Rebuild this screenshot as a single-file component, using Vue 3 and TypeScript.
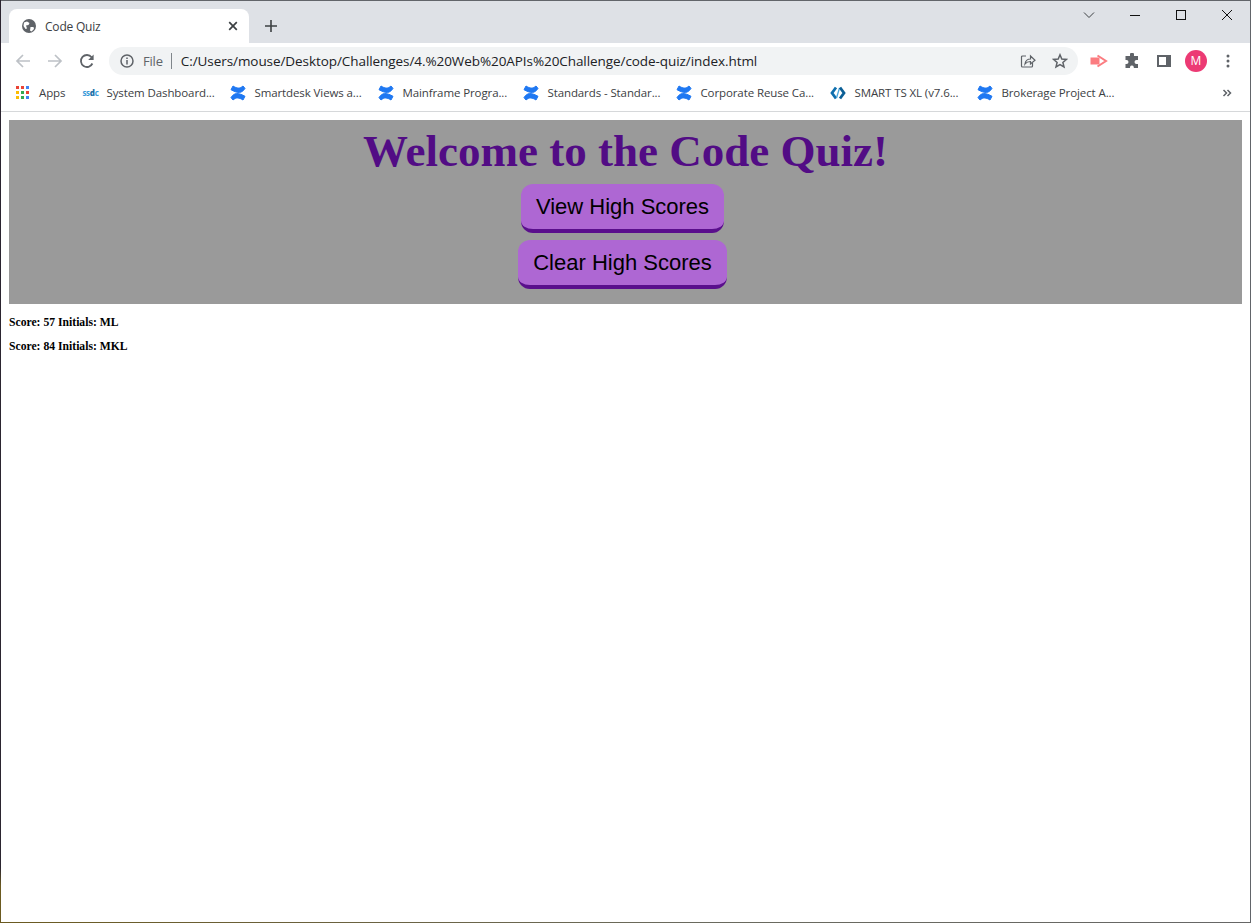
<script setup lang="ts">
interface Bookmark {
  label: string
  icon: 'confluence' | 'ssdc' | 'smart'
  width: number
}

const bookmarks: Bookmark[] = [
  { label: 'System Dashboard...', icon: 'ssdc', width: 108 },
  { label: 'Smartdesk Views a...', icon: 'confluence', width: 108 },
  { label: 'Mainframe Progra...', icon: 'confluence', width: 105 },
  { label: 'Standards - Standar...', icon: 'confluence', width: 113 },
  { label: 'Corporate Reuse Ca...', icon: 'confluence', width: 114 },
  { label: 'SMART TS XL (v7.6...', icon: 'smart', width: 107 },
  { label: 'Brokerage Project A...', icon: 'confluence', width: 113 },
]

const appColors = ['#ea4335', '#ea4335', '#4285f4', '#fbbc04', '#34a853', '#ea4335', '#fbbc04', '#34a853', '#4285f4']

const scores = [
  { score: 57, initials: 'ML' },
  { score: 84, initials: 'MKL' },
]
</script>

<template>
  <div class="frame">
    <div class="window">
      <div class="tabstrip">
        <div class="tab">
          <svg class="favicon" width="16" height="16" viewBox="0 0 16 16">
            <circle cx="8" cy="8" r="7" fill="#5f6368" />
            <path d="M3 4.500 6 3.500 8.500 5 7.500 7 5 7.500 6 10.500 4.500 11 2.500 8ZM9.500 9 12.500 9 13 11 10.500 13.500 9 12.500Z" fill="#fff" />
          </svg>
          <span class="tab_title">Code Quiz</span>
          <svg class="tab_close" width="10" height="10" viewBox="0 0 10 10">
            <path d="M1.200 1.200 8.800 8.800M8.800 1.200 1.200 8.800" stroke="#3c4043" stroke-width="1.700" fill="none" />
          </svg>
        </div>
        <svg class="newtab" width="14" height="14" viewBox="0 0 14 14">
          <path d="M7 1V13M1 7H13" stroke="#3c4043" stroke-width="1.600" fill="none" />
        </svg>
        <div class="spacer"></div>
        <div class="winctl">
          <svg width="12" height="8" viewBox="0 0 12 8"><path d="M1 1.500 6 6.500 11 1.500" stroke="#3c4043" fill="none" /></svg>
        </div>
        <div class="winctl">
          <svg width="12" height="12" viewBox="0 0 12 12"><path d="M1 6.500H11" stroke="#111" fill="none" /></svg>
        </div>
        <div class="winctl">
          <svg width="12" height="12" viewBox="0 0 12 12"><rect x="1.500" y="1.500" width="9" height="9" stroke="#111" fill="none" /></svg>
        </div>
        <div class="winctl">
          <svg width="12" height="12" viewBox="0 0 12 12"><path d="M1 1 11 11M11 1 1 11" stroke="#111" fill="none" /></svg>
        </div>
      </div>

      <div class="toolbar">
        <svg class="navicon" width="16" height="16" viewBox="0 0 16 16">
          <path d="M15 8H2M8 2 2 8 8 14" stroke="#bdc1c6" stroke-width="1.700" fill="none" />
        </svg>
        <svg class="navicon" width="16" height="16" viewBox="0 0 16 16">
          <path d="M1 8H14M8 2 14 8 8 14" stroke="#bdc1c6" stroke-width="1.700" fill="none" />
        </svg>
        <svg class="navicon" width="16" height="16" viewBox="0 0 16 16">
          <path d="M13.400 10.500A6 6 0 1 1 12.600 4.200" stroke="#5f6368" stroke-width="1.800" fill="none" />
          <path d="M14.600 1.600V7H9.200Z" fill="#5f6368" />
        </svg>
        <div class="omnibox">
          <svg width="16" height="16" viewBox="0 0 16 16">
            <circle cx="8" cy="8" r="6" stroke="#5f6368" stroke-width="1.500" fill="none" />
            <path d="M8 7V11.500M8 4.500V6" stroke="#5f6368" stroke-width="1.500" fill="none" />
          </svg>
          <span class="omnibox_file">File</span>
          <span class="omnibox_sep"></span>
          <span class="omnibox_url">C:/Users/mouse/Desktop/Challenges/4.%20Web%20APIs%20Challenge/code-quiz/index.html</span>
          <svg class="omnibox_share" width="16" height="16" viewBox="0 0 16 16">
            <path d="M6 3H2.500A1 1 0 0 0 1.500 4V13A1 1 0 0 0 2.500 14H11.500A1 1 0 0 0 12.500 13V10" stroke="#5f6368" stroke-width="1.200" fill="none" />
            <path d="M5 11C5.500 7.500 7.500 6 10.500 6V3L15 7.200 10.500 11V8.500C8 8.500 6.300 9.300 5 11Z" stroke="#5f6368" stroke-width="1.200" fill="none" />
          </svg>
          <svg width="16" height="16" viewBox="0 0 16 16">
            <path d="M8 1.800 9.800 6 14.400 6.400 10.900 9.400 12 13.900 8 11.500 4 13.900 5.100 9.400 1.600 6.400 6.200 6Z" stroke="#5f6368" stroke-width="1.500" fill="none" />
          </svg>
        </div>
        <svg class="ext ext_first" width="18" height="14" viewBox="0 0 18 14">
          <path d="M7.500 1.500 16 7 7.500 12.500" stroke="#fb7c80" stroke-width="2" fill="none" />
          <rect x="0.500" y="3.500" width="9" height="7" fill="#fb7c80" />
        </svg>
        <svg class="ext" width="16" height="16" viewBox="0 0 16 16">
          <path d="M6 1.500A2 2 0 0 1 10 1.500V3H14V7H12.500A2 2 0 0 0 12.500 11H14V15H9.800V14A2 2 0 0 0 6 14V15H1.500V11H2.500A2 2 0 0 0 2.500 7H1.500V3H6Z" fill="#5f6368" />
        </svg>
        <svg class="ext" width="16" height="14" viewBox="0 0 16 14">
          <path d="M1 1H15V13H1Z M3 3V11H10V3Z" fill="#5f6368" fill-rule="evenodd" />
        </svg>
        <div class="avatar">M</div>
        <svg class="ext" width="4" height="14" viewBox="0 0 4 14">
          <circle cx="2" cy="2" r="1.500" fill="#5f6368" />
          <circle cx="2" cy="7" r="1.500" fill="#5f6368" />
          <circle cx="2" cy="12" r="1.500" fill="#5f6368" />
        </svg>
      </div>

      <div class="bookmarks">
        <div class="bm bm_apps">
          <div class="apps_grid">
            <span v-for="(c, i) in appColors" :key="i" :style="{ background: c }"></span>
          </div>
          <span class="bm_label">Apps</span>
        </div>
        <div v-for="b in bookmarks" :key="b.label" class="bm">
          <span v-if="b.icon === 'ssdc'" class="ssdc">ss<b>d</b>c</span>
          <svg v-else-if="b.icon === 'confluence'" width="16" height="16" viewBox="0 0 16 16">
            <path d="M1 12.600C4 8 7.500 7 15 11.300L13 15C9 12.500 6.500 12 3 15Z" fill="#1f78f2" stroke="#1f78f2" />
            <path d="M15 3.400C12 8 8.500 9 1 4.700L3 1C7 3.500 9.500 4 13 1Z" fill="#1f78f2" stroke="#1f78f2" />
          </svg>
          <svg v-else width="16" height="16" viewBox="0 0 16 16">
            <path d="M6 2.500 2 8 6 13.500" stroke="#0f6fae" stroke-width="2.800" fill="none" />
            <path d="M9.500 3 6.500 13" stroke="#4aa6dc" stroke-width="1.300" fill="none" />
            <path d="M10 2.500 14 8 10 13.500" stroke="#0b5f96" stroke-width="2.800" fill="none" />
          </svg>
          <span class="bm_label" :style="{ width: b.width + 'px' }">{{ b.label }}</span>
        </div>
        <div class="spacer"></div>
        <svg class="bm_more" width="10" height="10" viewBox="0 0 10 10">
          <path d="M1.500 2 4.500 5 1.500 8M5.500 2 8.500 5 5.500 8" stroke="#5f6368" stroke-width="1.500" fill="none" />
        </svg>
      </div>

      <main class="page">
        <header class="hero">
          <h1 class="hero_title">Welcome to the Code Quiz!</h1>
          <button class="btn">View High Scores</button>
          <button class="btn">Clear High Scores</button>
        </header>
        <section class="scores">
          <h5 v-for="s in scores" :key="s.initials" class="score">Score: {{ s.score }} Initials: {{ s.initials }}</h5>
        </section>
      </main>
    </div>
  </div>
</template>

<style scoped>
.frame {
  height: 923px;
  box-sizing: border-box;
  padding: 1px;
  background:
    linear-gradient(to right, #6b5a20, #6a6a5e 55%, #666) left bottom / 100% 1px no-repeat,
    linear-gradient(to bottom, #2b2530 94%, #6b5a20 96%) left top / 1px 100% no-repeat,
    #62656a;
}
.window {
  height: 100%;
  overflow: hidden;
  display: flex;
  flex-direction: column;
  background: #fff;
  font-family: 'Open Sans', 'Noto Sans', sans-serif;
}
.spacer {
  flex: 1;
}
.tabstrip {
  height: 42px;
  flex: none;
  display: flex;
  align-items: flex-start;
  background: #dee1e6;
  padding-left: 8px;
}
.tab {
  width: 240px;
  height: 34px;
  margin-top: 8px;
  box-sizing: border-box;
  display: flex;
  align-items: center;
  padding: 0 11px 0 12px;
  background: #fff;
  border-radius: 8px 8px 0 0;
}
.tab_title {
  flex: 1;
  margin-left: 8px;
  font-size: 12px;
  letter-spacing: -0.2px;
  color: #3c4043;
}
.newtab {
  margin: 18px 0 0 15px;
}
.winctl {
  width: 46px;
  height: 28px;
  display: flex;
  align-items: center;
  justify-content: center;
}
.toolbar {
  height: 37px;
  flex: none;
  display: flex;
  align-items: center;
  padding: 0 0 2px 14px;
  box-sizing: border-box;
}
.navicon {
  margin-right: 16px;
}
.omnibox {
  width: 969px;
  height: 28px;
  margin-left: -2px;
  box-sizing: border-box;
  display: flex;
  align-items: center;
  padding: 0 10px;
  border-radius: 14px;
  background: #f1f3f4;
}
.omnibox_file {
  margin-left: 8px;
  font-size: 13px;
  letter-spacing: -0.2px;
  color: #5f6368;
}
.omnibox_sep {
  width: 1px;
  height: 16px;
  margin: 0 9px 0 8px;
  background: #80868b;
}
.omnibox_url {
  flex: 1;
  font-size: 13.5px;
  letter-spacing: -0.07px;
  color: #202124;
  white-space: nowrap;
}
.omnibox_share {
  margin-right: 16px;
}
.ext {
  margin-left: 16px;
  flex: none;
}
.ext_first {
  margin-left: 12px;
}
.avatar {
  width: 22px;
  height: 22px;
  margin-left: 13px;
  border-radius: 50%;
  background: #ec3a74;
  color: #fff;
  font-size: 12px;
  line-height: 22px;
  text-align: center;
}
.avatar + .ext {
  margin-left: 19px;
}
.bookmarks {
  height: 32px;
  flex: none;
  display: flex;
  align-items: center;
  box-sizing: border-box;
  padding: 0 0 6px 15px;
  border-bottom: 1px solid #d6d8da;
}
.bm {
  display: flex;
  align-items: center;
  gap: 8px;
  margin-right: 16px;
}
.bm_apps {
  gap: 9px;
  margin-right: 17px;
}
.bm_label {
  font-size: 11.5px;
  letter-spacing: -0.1px;
  color: #3c4043;
  white-space: nowrap;
}
.apps_grid {
  width: 14px;
  display: grid;
  grid-template-columns: repeat(3, 3px);
  gap: 2px;
}
.apps_grid span {
  height: 3px;
}
.ssdc {
  width: 16px;
  font-size: 8px;
  font-weight: 700;
  color: #3a9ad9;
  letter-spacing: -0.3px;
  white-space: nowrap;
}
.ssdc b {
  color: #1b6fa8;
}
.bm_more {
  margin-right: 18px;
}
.page {
  padding: 8px;
}
.hero {
  background: #9a9a9a;
  display: flex;
  flex-direction: column;
  align-items: center;
  padding-bottom: 15px;
}
.hero_title {
  margin: 5px 0 7px;
  font: bold 45px/52px 'Liberation Serif', serif;
  color: #520c85;
}
.btn {
  margin: 0 6px 7px 0;
  padding: 0 15px;
  height: 49px;
  box-sizing: border-box;
  border: 0;
  border-bottom: 4px solid #5a0f8c;
  border-radius: 12px;
  background: #ae67d3;
  color: #000;
  font: 22px 'Liberation Sans', Arial, sans-serif;
}
.btn:last-child {
  margin-bottom: 0;
}
.scores {
  padding-top: 12px;
}
.score {
  margin: 0 0 10px;
  font: bold 11.67px/14px 'Liberation Serif', serif;
  color: #000;
}
</style>
